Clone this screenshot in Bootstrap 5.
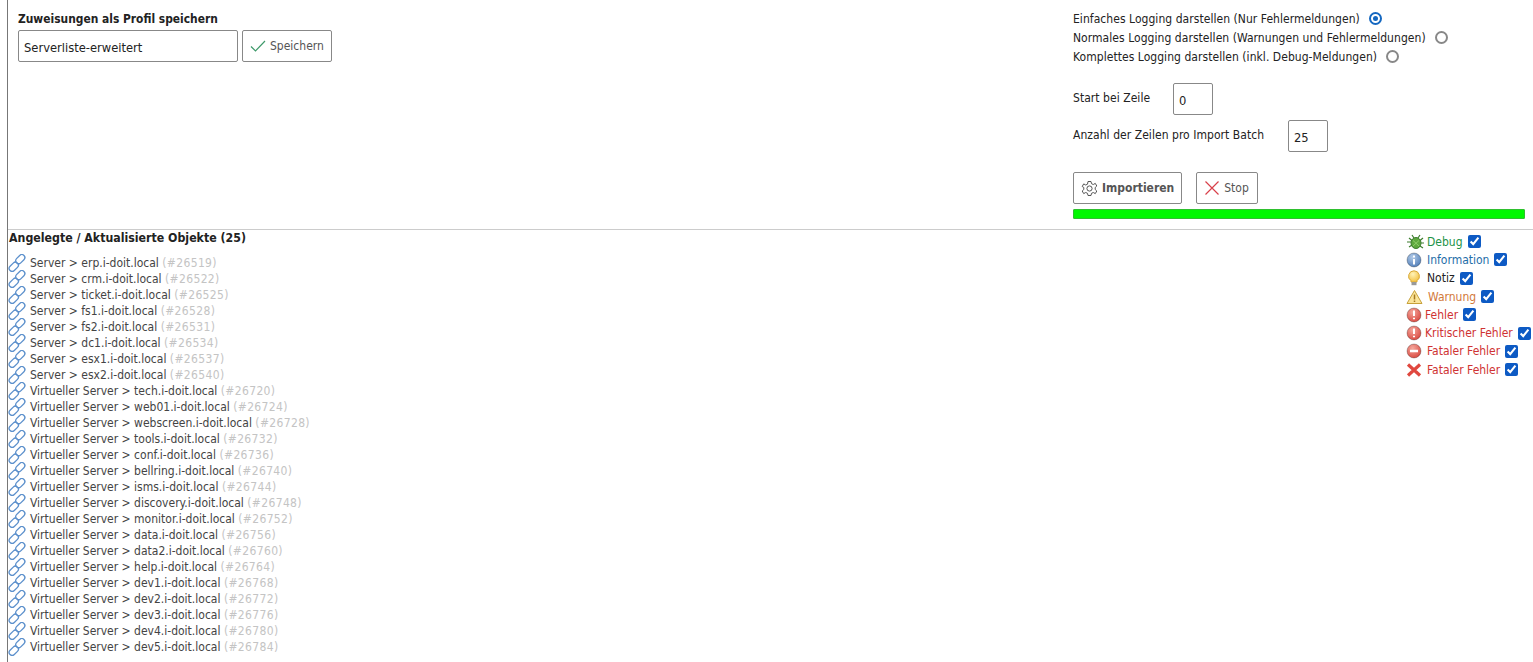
<!DOCTYPE html>
<html lang="de">
<head>
    <meta charset="UTF-8">
    <title>Import</title>
    <link href="https://cdn.jsdelivr.net/npm/bootstrap@5.3.0/dist/css/bootstrap.min.css" rel="stylesheet">
    <style>
        body {
            font-family: "DejaVu Sans Condensed", "DejaVu Sans", "Liberation Sans", sans-serif;
            font-stretch: condensed;
            font-size: 12px;
            color: #333;
            background: #fff;
            overflow: hidden;
        }
        .page-frame { margin-left: 7px; border-left: 1px solid #777; height: 662px; }
        .top-area { height: 230px; border-bottom: 1px solid #ccc; padding: 11px 8px 0 10px; }
        .top-title { font-weight: 700; font-size: 11.9px; color: #222; line-height: 16px; margin-bottom: 3px; }
        .plain-input {
            border: 1px solid #888; border-radius: 2px; height: 32px; padding: 2px 5px 0;
            font: inherit; font-size: 12.8px; color: #222; background: #fff; outline: 0;
        }
        .plain-btn {
            display: inline-flex; align-items: center; gap: 4px; height: 32px; padding: 0 7px;
            border: 1px solid #888; border-radius: 2px; background: #fff; color: #555; font: inherit;
        }
        .stop-btn { padding-right: 8px; }
        .log-panel { width: 452px; color: #222; margin-top: -2px; letter-spacing: .05px; }
        .log-line { height: 19px; display: flex; align-items: center; gap: 9px; }
        .log-radio { width: 13px; height: 13px; border: 2px solid #888; border-radius: 50%; flex: none; }
        .log-radio.active { border-color: #1467c0; position: relative; }
        .log-radio.active::after {
            content: ""; position: absolute; left: 2px; top: 2px; width: 5px; height: 5px;
            border-radius: 50%; background: #1467c0;
        }
        .num-row { display: flex; align-items: flex-start; }
        .num-row span { padding-top: 6px; }
        .num-input { width: 40px; }
        .green-bar { height: 10px; background: #00f800; border: 1px solid #2fc02f; border-radius: 1px; margin-top: 5px; }
        .list-title { font-weight: 700; font-size: 12.25px; color: #222; line-height: 16px; margin: 0 0 9px 1px; }
        .obj-row { height: 16px; display: flex; align-items: center; gap: 4px; color: #444; white-space: nowrap; }
        .obj-row svg { flex: none; }
        .obj-id { color: #c4c4c4; letter-spacing: .35px; }
        .legend-box { width: 127px; padding-top: 2.5px; flex: none; }
        .legend-row { height: 18.3px; display: flex; align-items: center; gap: 5px; white-space: nowrap; }
        .legend-row svg { flex: none; }
        .legend-row input { width: 13px; height: 13px; margin: 0; accent-color: #0d5ac4; flex: none; }
        .legend-tight { margin-left: -2px; }
    </style>
</head>
<body>
    <svg width="0" height="0" class="d-block">
        <defs>
            <radialGradient id="glossRed" cx="40%" cy="30%" r="75%"><stop offset="0" stop-color="#f4a79c"/><stop offset="1" stop-color="#d9483f"/></radialGradient>
            <radialGradient id="glossBlue" cx="40%" cy="30%" r="75%"><stop offset="0" stop-color="#b3cbe8"/><stop offset="1" stop-color="#4f7db8"/></radialGradient>
            <radialGradient id="glossBulb" cx="40%" cy="30%" r="75%"><stop offset="0" stop-color="#fff3b8"/><stop offset="1" stop-color="#f3bf3c"/></radialGradient>
        </defs>
        <symbol id="chain" viewBox="0 0 18 18">
            <g fill="none" stroke="#5c90cc" stroke-width="1.3">
                <rect x="7" y="2.2" width="10.5" height="6" rx="3" transform="rotate(-45 12.2 5.2)"/>
                <rect x=".5" y="9.8" width="10.5" height="6" rx="3" transform="rotate(-45 5.8 12.8)"/>
            </g>
        </symbol>
    </svg>
    <div class="page-frame">
        <div class="top-area d-flex justify-content-between">
            <div>
                <div class="top-title">Zuweisungen als Profil speichern</div>
                <div class="d-flex gap-1">
                    <input class="plain-input profile-name" style="width:220px" value="Serverliste-erweitert">
                    <button class="plain-btn">
                        <svg width="16" height="14" viewBox="0 0 16 14"><path d="M1 7.5 5.5 12 15 2" fill="none" stroke="#3f9a6b" stroke-width="1.2"/></svg>
                        Speichern
                    </button>
                </div>
            </div>
            <div class="log-panel">
                <div class="log-line">Einfaches Logging darstellen (Nur Fehlermeldungen) <i class="log-radio active"></i></div>
                <div class="log-line">Normales Logging darstellen (Warnungen und Fehlermeldungen) <i class="log-radio"></i></div>
                <div class="log-line">Komplettes Logging darstellen (inkl. Debug-Meldungen) <i class="log-radio"></i></div>
                <div class="num-row" style="margin-top:17px"><span style="width:100px">Start bei Zeile</span><input class="plain-input num-input" value="0"></div>
                <div class="num-row" style="margin-top:5px"><span style="width:215px">Anzahl der Zeilen pro Import Batch</span><input class="plain-input num-input" value="25"></div>
                <div class="d-flex" style="gap:14px;margin-top:20px">
                    <button class="plain-btn fw-bold">
                        <svg width="17" height="17" viewBox="0 0 17 17"><g fill="none" stroke="#555" stroke-width="1"><circle cx="8.5" cy="8.5" r="2.6"/><path d="M7 1.5h3l.5 2.2 1.8.8 2-1.1 1.5 2.6-1.6 1.5v2l1.6 1.5-1.5 2.6-2-1.1-1.8.8-.5 2.2H7l-.5-2.2-1.8-.8-2 1.1-1.5-2.6 1.6-1.5v-2L1.2 6.5l1.5-2.6 2 1.1 1.8-.8z"/></g></svg>
                        Importieren
                    </button>
                    <button class="plain-btn stop-btn">
                        <svg width="16" height="16" viewBox="0 0 16 16"><path d="M1.5 1.5 14.5 14.5M14.5 1.5 1.5 14.5" stroke="#d8404a" stroke-width="1.2"/></svg>
                        Stop
                    </button>
                </div>
                <div class="green-bar"></div>
            </div>
        </div>
        <div class="d-flex justify-content-between">
            <div id="objectList">
                <div class="list-title">Angelegte / Aktualisierte Objekte (25)</div>
            </div>
            <div class="legend-box" id="legendBox"></div>
        </div>
    </div>
    <script>
        const objects = [
            ["Server", "erp", 26519], ["Server", "crm", 26522], ["Server", "ticket", 26525], ["Server", "fs1", 26528],
            ["Server", "fs2", 26531], ["Server", "dc1", 26534], ["Server", "esx1", 26537], ["Server", "esx2", 26540],
            ["Virtueller Server", "tech", 26720], ["Virtueller Server", "web01", 26724], ["Virtueller Server", "webscreen", 26728],
            ["Virtueller Server", "tools", 26732], ["Virtueller Server", "conf", 26736], ["Virtueller Server", "bellring", 26740],
            ["Virtueller Server", "isms", 26744], ["Virtueller Server", "discovery", 26748], ["Virtueller Server", "monitor", 26752],
            ["Virtueller Server", "data", 26756], ["Virtueller Server", "data2", 26760], ["Virtueller Server", "help", 26764],
            ["Virtueller Server", "dev1", 26768], ["Virtueller Server", "dev2", 26772], ["Virtueller Server", "dev3", 26776],
            ["Virtueller Server", "dev4", 26780], ["Virtueller Server", "dev5", 26784]
        ];
        let list = document.getElementById("objectList");
        objects.forEach(o => {
            let row = document.createElement("div");
            row.className = "obj-row";
            row.innerHTML = `<svg width="18" height="18"><use href="#chain"/></svg><span>${o[0]} &gt; ${o[1]}.i-doit.local <span class="obj-id">(#${o[2]})</span></span>`;
            list.appendChild(row);
        });

        const circle = (c, inner) => `<svg width="16" height="16" viewBox="0 0 16 16"><circle cx="8" cy="8" r="7" fill="url(#${c})" stroke="#00000040"/>${inner}</svg>`;
        const bang = `<path d="M8 3.5v5.5M8 10.7v1.6" stroke="#fff" stroke-width="2"/>`;
        const legend = [
            ["Debug", "#1d9348", `<svg width="18" height="16" viewBox="0 0 18 16" style="margin-right:-2px"><ellipse cx="10" cy="9" rx="5" ry="5.5" fill="#5fa83f" stroke="#3d7d2e"/><path d="M7 6.5 13 12M13 6.5 7 12" stroke="#8fce6a"/><path d="M1 8h4M3 4l3 2.5M3 13l3-2M6 1l2 3M14 1l-2 3M17 4l-3 2.5M18 9h-3M17 14l-3-2" stroke="#3d7d2e" stroke-width="1.2"/></svg>`],
            ["Information", "#1f6ea8", circle("glossBlue", `<path d="M8 3.5v2M8 7v5.5" stroke="#fff" stroke-width="2"/>`)],
            ["Notiz", "#222", `<svg width="16" height="16" viewBox="0 0 16 16"><path d="M8 .8a5.4 5.4 0 0 0-3 9.9V12h6v-1.300A5.400 5.400 0 0 0 8 .8z" fill="url(#glossBulb)" stroke="#d8a93a"/><rect x="5.500" y="12" width="5" height="3.200" fill="#999"/></svg>`],
            ["Warnung", "#d2793a", `<svg width="17" height="16" viewBox="0 0 17 16"><path d="M8.500 1.500 16 14.500H1z" fill="#fbe59a" stroke="#c7a13a"/><path d="M8.500 5.500v5M8.500 11.500v1.600" stroke="#a5791f" stroke-width="1.500"/></svg>`],
            ["Fehler", "#cf3333", circle("glossRed", bang), true],
            ["Kritischer Fehler", "#cf3333", circle("glossRed", bang), true],
            ["Fataler Fehler", "#cf3333", circle("glossRed", `<path d="M4 8h8" stroke="#fff" stroke-width="2.500"/>`)],
            ["Fataler Fehler", "#cf3333", `<svg width="16" height="16" viewBox="0 0 16 16"><path d="M2 2.500 14 13.500M14 2.500 2 13.500" stroke="#e0483f" stroke-width="3.200"/></svg>`]
        ];
        let box = document.getElementById("legendBox");
        legend.forEach(l => {
            let row = document.createElement("div");
            row.className = "legend-row";
            row.innerHTML = `${l[2]}<span class="${l[3] ? "legend-tight" : ""}" style="color:${l[1]}">${l[0]}</span><input type="checkbox" checked>`;
            box.appendChild(row);
        });
    </script>
    <script src="https://cdn.jsdelivr.net/npm/bootstrap@5.3.0/dist/js/bootstrap.bundle.min.js"></script>
</body>
</html>
